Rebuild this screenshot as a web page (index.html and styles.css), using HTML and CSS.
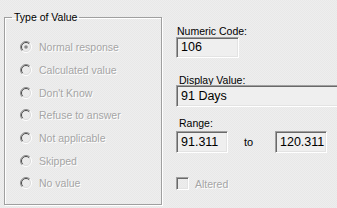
FILE: index.html
```html
<!DOCTYPE html>
<html lang="en">
  <head>
    <meta charset="UTF-8" />
    <title>Value</title>
    <link rel="stylesheet" href="styles.css">
  </head>
  <body>
    <div class="dialog">
      <fieldset class="group">
        <legend>Type of Value</legend>
        <div class="radio-list">
          <div class="radio-row">
            <svg class="radio" viewBox="0 0 12 12" width="12" height="12">
              <path d="M9.9 2.1A5.5 5.5 0 0 0 2.1 9.9" fill="none" stroke="#8c8c8c" />
              <path d="M9.2 2.8A4.5 4.5 0 0 0 2.8 9.2" fill="none" stroke="#4a4a4a" />
              <path d="M9.9 2.1A5.5 5.5 0 0 1 2.1 9.9" fill="none" stroke="#ffffff" />
              <path d="M9.2 2.8A4.5 4.5 0 0 1 2.8 9.2" fill="none" stroke="#dcdcdc" />
              <circle cx="6" cy="6" r="1.8" fill="#8a8a8a" />
            </svg>
            <span>Normal response</span>
          </div>
          <div class="radio-row">
            <svg class="radio" viewBox="0 0 12 12" width="12" height="12">
              <path d="M9.9 2.1A5.5 5.5 0 0 0 2.1 9.9" fill="none" stroke="#8c8c8c" />
              <path d="M9.2 2.8A4.5 4.5 0 0 0 2.8 9.2" fill="none" stroke="#4a4a4a" />
              <path d="M9.9 2.1A5.5 5.5 0 0 1 2.1 9.9" fill="none" stroke="#ffffff" />
              <path d="M9.2 2.8A4.5 4.5 0 0 1 2.8 9.2" fill="none" stroke="#dcdcdc" />
            </svg>
            <span>Calculated value</span>
          </div>
          <div class="radio-row">
            <svg class="radio" viewBox="0 0 12 12" width="12" height="12">
              <path d="M9.9 2.1A5.5 5.5 0 0 0 2.1 9.9" fill="none" stroke="#8c8c8c" />
              <path d="M9.2 2.8A4.5 4.5 0 0 0 2.8 9.2" fill="none" stroke="#4a4a4a" />
              <path d="M9.9 2.1A5.5 5.5 0 0 1 2.1 9.9" fill="none" stroke="#ffffff" />
              <path d="M9.2 2.8A4.5 4.5 0 0 1 2.8 9.2" fill="none" stroke="#dcdcdc" />
            </svg>
            <span>Don't Know</span>
          </div>
          <div class="radio-row">
            <svg class="radio" viewBox="0 0 12 12" width="12" height="12">
              <path d="M9.9 2.1A5.5 5.5 0 0 0 2.1 9.9" fill="none" stroke="#8c8c8c" />
              <path d="M9.2 2.8A4.5 4.5 0 0 0 2.8 9.2" fill="none" stroke="#4a4a4a" />
              <path d="M9.9 2.1A5.5 5.5 0 0 1 2.1 9.9" fill="none" stroke="#ffffff" />
              <path d="M9.2 2.8A4.5 4.5 0 0 1 2.8 9.2" fill="none" stroke="#dcdcdc" />
            </svg>
            <span>Refuse to answer</span>
          </div>
          <div class="radio-row">
            <svg class="radio" viewBox="0 0 12 12" width="12" height="12">
              <path d="M9.9 2.1A5.5 5.5 0 0 0 2.1 9.9" fill="none" stroke="#8c8c8c" />
              <path d="M9.2 2.8A4.5 4.5 0 0 0 2.8 9.2" fill="none" stroke="#4a4a4a" />
              <path d="M9.9 2.1A5.5 5.5 0 0 1 2.1 9.9" fill="none" stroke="#ffffff" />
              <path d="M9.2 2.8A4.5 4.5 0 0 1 2.8 9.2" fill="none" stroke="#dcdcdc" />
            </svg>
            <span>Not applicable</span>
          </div>
          <div class="radio-row">
            <svg class="radio" viewBox="0 0 12 12" width="12" height="12">
              <path d="M9.9 2.1A5.5 5.5 0 0 0 2.1 9.9" fill="none" stroke="#8c8c8c" />
              <path d="M9.2 2.8A4.5 4.5 0 0 0 2.8 9.2" fill="none" stroke="#4a4a4a" />
              <path d="M9.9 2.1A5.5 5.5 0 0 1 2.1 9.9" fill="none" stroke="#ffffff" />
              <path d="M9.2 2.8A4.5 4.5 0 0 1 2.8 9.2" fill="none" stroke="#dcdcdc" />
            </svg>
            <span>Skipped</span>
          </div>
          <div class="radio-row">
            <svg class="radio" viewBox="0 0 12 12" width="12" height="12">
              <path d="M9.9 2.1A5.5 5.5 0 0 0 2.1 9.9" fill="none" stroke="#8c8c8c" />
              <path d="M9.2 2.8A4.5 4.5 0 0 0 2.8 9.2" fill="none" stroke="#4a4a4a" />
              <path d="M9.9 2.1A5.5 5.5 0 0 1 2.1 9.9" fill="none" stroke="#ffffff" />
              <path d="M9.2 2.8A4.5 4.5 0 0 1 2.8 9.2" fill="none" stroke="#dcdcdc" />
            </svg>
            <span>No value</span>
          </div>
        </div>
      </fieldset>

      <div class="fields">
        <div class="label label-code">Numeric Code:</div>
        <div class="box box-code">106</div>

        <div class="label label-display">Display Value:</div>
        <div class="box box-display">91 Days</div>

        <div class="label label-range">Range:</div>
        <div class="range-row">
          <div class="box box-range">91.311</div>
          <span class="to">to</span>
          <div class="box box-range">120.311</div>
        </div>

        <div class="check-row">
          <span class="checkbox"></span>
          <span class="disabled">Altered</span>
        </div>
      </div>
    </div>
  </body>
</html>
```

FILE: styles.css
```css
* {
  margin: 0;
  padding: 0;
  box-sizing: border-box;
}
html,
body {
  height: 100%;
  overflow: hidden;
}
body {
  font-family: "Liberation Sans", Arial, sans-serif;
  font-size: 10.5px;
  color: #000;
  background: repeating-conic-gradient(#eeeeee 0 25%, #e8e8e8 0 50%) 0 0 / 2px 2px;
}
.dialog {
  display: flex;
  padding-left: 4px;
}

/* Group box */
.group {
  flex: none;
  width: 158px;
  height: 194px;
  margin-top: 11px;
  border: 1px solid #9f9f9f;
  box-shadow: inset 1px 1px 0 #fff, 1px 1px 0 #fff;
  padding: 0;
}
.group legend {
  margin-left: 7px;
  padding: 0 2px;
  line-height: 12px;
}
.radio-list {
  padding-top: 13px;
  padding-left: 15px;
}
.radio-row {
  display: flex;
  align-items: center;
  gap: 7px;
  height: 22.7px;
  color: #a5a5a5;
  text-shadow: 1px 1px 0 #fff;
}
.radio {
  flex: none;
}

/* Right column */
.fields {
  flex: none;
  display: flex;
  flex-direction: column;
  padding-top: 26px;
  margin-left: 14px;
}
.label {
  line-height: 10px;
  padding-left: 1px;
}
.label-code {
  margin-bottom: 1px;
}
.label-display {
  margin-top: 17px;
  padding-left: 3px;
}
.label-range {
  margin-top: 11px;
  margin-bottom: 3px;
  padding-left: 3px;
}
.box {
  height: 22px;
  padding: 0 4px;
  font-size: 12.5px;
  line-height: 20px;
  border: 1px solid;
  border-color: #a0a0a0 #fff #fff #a0a0a0;
  box-shadow: inset 1px 1px 0 #696969, inset -1px -1px 0 #e3e3e3;
  background: #efefef;
  white-space: nowrap;
}
.box-code {
  width: 63px;
  height: 21px;
  line-height: 19px;
}
.box-display {
  width: 170px;
}
.range-row {
  display: flex;
  align-items: center;
}
.box-range {
  width: 52px;
}
.to {
  width: 47px;
  font-size: 11px;
  padding-left: 16px;
}
.check-row {
  display: flex;
  align-items: center;
  gap: 6px;
  margin-top: 24px;
}
.checkbox {
  width: 13px;
  height: 13px;
  border: 1px solid;
  border-color: #a0a0a0 #fff #fff #a0a0a0;
  box-shadow: inset 1px 1px 0 #696969, inset -1px -1px 0 #e3e3e3;
}
.disabled {
  color: #a5a5a5;
  text-shadow: 1px 1px 0 #fff;
}
```
